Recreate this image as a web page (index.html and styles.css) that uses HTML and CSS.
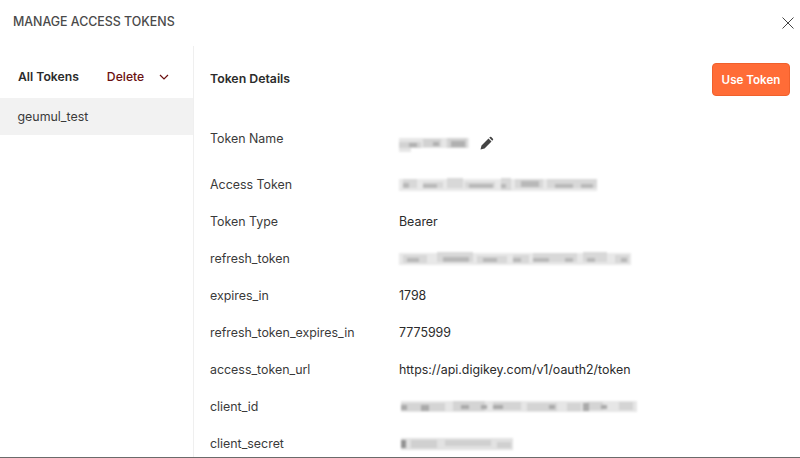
FILE: index.html
```html
<!DOCTYPE html>
<html lang="en">
<head>
<meta charset="utf-8">
<title>Manage Access Tokens</title>
<link rel="stylesheet" href="styles.css">
</head>
<body>
<div class="modal">
  <header class="modal-head">
    <h1 class="modal-title">MANAGE ACCESS TOKENS</h1>
    <svg class="close" viewBox="0 0 12 12" width="12" height="12"><path d="M.5.5l11 11M11.5.5l-11 11" fill="none" stroke="#444" stroke-width="1"/></svg>
  </header>
  <div class="modal-body">
    <aside class="side">
      <div class="side-head">
        <span class="all">All Tokens</span>
        <span class="del">Delete</span>
        <svg class="chev" viewBox="0 0 10 6" width="10" height="6"><path d="M1 1l4 4 4-4" fill="none" stroke="#6b0f0f" stroke-width="1.2"/></svg>
      </div>
      <div class="side-item">geumul_test</div>
    </aside>
    <main class="detail">
      <div class="detail-head">
        <h2 class="detail-title">Token Details</h2>
        <button class="use">Use Token</button>
      </div>
      <div class="rows">
        <div class="row row-name">
          <span class="key">Token Name</span>
          <span class="val val-name">
            <svg class="mosaic" width="72" height="16" viewBox="0 0 72 16">
              <path fill="#e6e6e6" d="M2 2h70v10H2zM2 12h12v4H2z"/>
              <path fill="#d2d2d2" d="M2 6h22v6H2zM26 3h18v8H26zM50 2h20v10H50z"/>
              <path fill="#b0b0b0" d="M12 7h8v4h-8zM54 5h14v6H54zM36 6h6v4h-6z"/>
            </svg>
            <svg class="pencil" viewBox="0 0 14 14" width="14" height="14"><path fill="#444" d="M0.5 13.5l1-4 7-7 3 3-7 7zM9.3 1.7l.6-.6a1 1 0 0 1 1.4 0l1.6 1.6a1 1 0 0 1 0 1.4l-.6.6z"/></svg>
          </span>
        </div>
        <div class="row">
          <span class="key">Access Token</span>
          <span class="val">
            <svg class="mosaic" width="202" height="16" viewBox="0 0 202 16">
              <path fill="#e8e8e8" d="M2 2h198v12H2z"/>
              <path fill="#d8d8d8" d="M6 2h14v9H6zM26 5h20v6H26zM50 1h16v10H50zM68 5h30v6H68zM104 1h10v12h-10zM118 2h28v9h-28zM150 2h50v9h-50z"/>
              <path fill="#b8b8b8" d="M6 6h6v5H6zM26 7h14v4H26zM72 7h24v4H72zM104 7h5v4h-5zM124 4h18v6h-18zM158 7h18v4h-18zM184 7h12v4h-12z"/>
            </svg>
          </span>
        </div>
        <div class="row">
          <span class="key">Token Type</span>
          <span class="val">Bearer</span>
        </div>
        <div class="row">
          <span class="key">refresh_token</span>
          <span class="val">
            <svg class="mosaic" width="236" height="16" viewBox="0 0 236 16">
              <path fill="#e8e8e8" d="M2 2h232v12H2z"/>
              <path fill="#d8d8d8" d="M6 4h24v8H6zM40 1h36v10H40zM80 5h30v7H80zM116 4h16v8h-16zM136 2h44v9h-44zM186 1h24v10h-24zM218 4h14v8h-14z"/>
              <path fill="#b8b8b8" d="M10 7h12v4H10zM46 6h26v5H46zM86 7h14v4H86zM116 7h8v4h-8zM136 7h16v4h-16zM168 7h8v4h-8zM190 7h8v4h-8zM224 7h6v4h-6z"/>
            </svg>
          </span>
        </div>
        <div class="row">
          <span class="key">expires_in</span>
          <span class="val">1798</span>
        </div>
        <div class="row">
          <span class="key">refresh_token_expires_in</span>
          <span class="val">7775999</span>
        </div>
        <div class="row">
          <span class="key">access_token_url</span>
          <span class="val">https://api.digikey.com/v1/oauth2/token</span>
        </div>
        <div class="row">
          <span class="key">client_id</span>
          <span class="val">
            <svg class="mosaic" width="242" height="16" viewBox="0 0 242 16">
              <path fill="#e6e6e6" d="M4 2h236v11H4z"/>
              <path fill="#d4d4d4" d="M4 4h44v8H4zM56 2h32v10H56zM96 3h28v8H96zM130 4h30v8h-30zM170 4h14v8h-14zM190 3h16v8h-16zM222 3h14v8h-14z"/>
              <path fill="#aaaaaa" d="M4 6h6v5H4zM24 6h8v6h-8zM64 6h8v4h-8zM84 6h6v4h-6zM96 6h10v4H96zM152 6h6v4h-6zM186 4h6v8h-6zM204 6h6v4h-6z"/>
            </svg>
          </span>
        </div>
        <div class="row">
          <span class="key">client_secret</span>
          <span class="val">
            <svg class="mosaic" width="116" height="16" viewBox="0 0 116 16">
              <path fill="#e2e2e2" d="M4 2h112v12H4z"/>
              <path fill="#d0d0d0" d="M14 4h26v8H14zM48 4h46v6H48zM100 6h14v6h-14z"/>
              <path fill="#929292" d="M4 4h5v8H4z"/>
            </svg>
          </span>
        </div>
      </div>
    </main>
  </div>
</div>
</body>
</html>
```

FILE: styles.css
```css
* { box-sizing: border-box; }
html, body { margin: 0; height: 100%; }
body {
  background: #fff;
  font-family: Inter, "Liberation Sans", sans-serif;
  font-size: 12.4px;
  color: #2b2b2b;
  overflow: hidden;
}
.modal {
  width: 800px;
  height: 458px;
  display: flex;
  flex-direction: column;
  border-bottom: 1px solid #6b6b6b;
  overflow: hidden;
}
.modal-head {
  flex: none;
  height: 46px;
  padding: 0 6px 4px 13px;
  display: flex;
  align-items: center;
  justify-content: space-between;
}
.modal-title {
  margin: 0;
  font-size: 12.4px;
  font-weight: 500;
  color: #4a4a4a;
}
.close { margin-top: 4px; }
.modal-body { flex: 1; min-height: 0; display: flex; }
.side {
  flex: none;
  width: 194px;
  border-right: 1px solid #efefef;
}
.side-head {
  height: 52px;
  padding: 9px 24px 0 18px;
  display: flex;
  align-items: center;
}
.all { font-weight: 600; color: #2b2b2b; font-size: 12.2px; }
.del { margin-left: 28px; color: #6b1010; font-weight: 500; font-size: 12.2px; }
.chev { margin-left: auto; }
.side-item {
  height: 37px;
  padding-left: 17.5px;
  display: flex;
  align-items: center;
  background: #f2f2f2;
  color: #3a3a3a;
}
.detail { flex: 1; min-width: 0; padding: 0 10px 0 16px; }
.detail-head {
  height: 75px;
  padding-top: 17px;
  display: flex;
  align-items: flex-start;
  justify-content: space-between;
}
.detail-title {
  margin: 8px 0 0;
  font-size: 12.3px;
  font-weight: 600;
  color: #2b2b2b;
}
.use {
  width: 78px;
  height: 33px;
  border: 1px solid #f0602c;
  border-radius: 4px;
  background: #ff6c37;
  color: #fff;
  font: 600 11.6px Inter, "Liberation Sans", sans-serif;
  padding: 0;
}
.rows { display: flex; flex-direction: column; }
.row {
  height: 37px;
  display: flex;
  align-items: center;
  flex: none;
}
.row-name { height: 45px; align-items: flex-start; padding-top: 10px; }
.key { width: 189px; flex: none; color: #3a3a3a; }
.val { display: flex; align-items: center; color: #2b2b2b; }
.mosaic { display: block; filter: blur(1.3px); margin-left: -2px; }
.val-name .mosaic { margin-top: 5px; }
.pencil { margin-left: 11px; margin-top: 3px; }
```
